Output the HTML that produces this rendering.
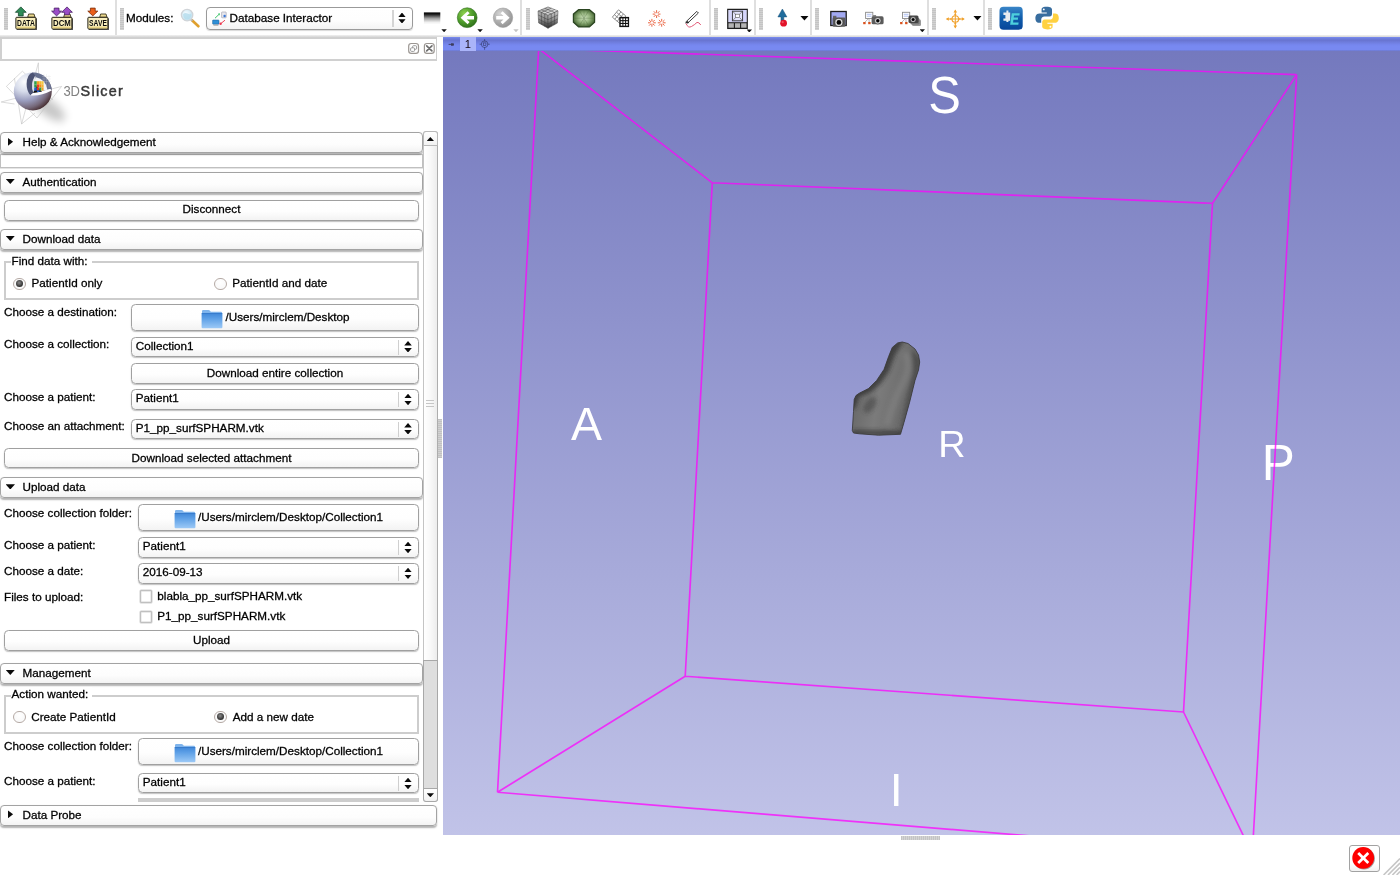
<!DOCTYPE html>
<html lang="en">
<head>
<meta charset="utf-8">
<title>3D Slicer - Database Interactor</title>
<style>
*{box-sizing:border-box;margin:0;padding:0}
html,body{width:1400px;height:875px;overflow:hidden;background:#fff}
body>*{will-change:transform}
body{position:relative;font-family:"Liberation Sans",sans-serif;font-size:11.7px;color:#000;-webkit-font-smoothing:antialiased;-webkit-text-stroke:.28px #000}
.abs{position:absolute}
/* toolbar */
#toolbar{position:absolute;left:0;top:0;width:1400px;height:37px;background:linear-gradient(#fff 0,#fff 34.6px,#ececec 35.4px,#d6d6d6 37px)}
.grip{position:absolute;top:8px;width:4.3px;height:22px;background:repeating-linear-gradient(to bottom,#c4c4c4 0,#c4c4c4 1px,#d2d2d2 1px,#d2d2d2 2px)}
.tsep{position:absolute;top:0;width:1.8px;margin-left:-.4px;height:35.4px;background:#dfdfdf}
.marr{position:absolute;width:5.4px;height:3.1px;background:#111;clip-path:polygon(0 0,100% 0,50% 100%)}
.darr{position:absolute;width:8.9px;height:5px;background:#0a0a0a;clip-path:polygon(0 0,100% 0,50% 100%)}
/* dock title */
#docktitle{position:absolute;left:0;top:36.8px;width:437.3px;height:24.3px;background:#fff;border:2px solid #d0d0d0;border-right-width:1px}
/* panel widgets */
.cbtn{position:absolute;left:0;height:21px;background:linear-gradient(#fff,#fdfdfd 60%,#f3f3f3);border:1px solid #a3a3a3;border-radius:4px;box-shadow:0 1.2px 1.6px rgba(0,0,0,.3);line-height:15.5px;padding-left:21.5px;white-space:nowrap}
.cbtn .tr{position:absolute;left:6.7px;top:4.5px;width:5.4px;height:8.2px;background:#0a0a0a;clip-path:polygon(0 0,100% 50%,0 100%)}
.cbtn .td{position:absolute;left:4.6px;top:5.3px;width:9.4px;height:5.2px;background:#0a0a0a;clip-path:polygon(0 0,100% 0,50% 100%)}
.pbtn{position:absolute;background:linear-gradient(#fff,#fefefe 55%,#f3f3f3);border:1px solid #a0a0a0;border-radius:4.5px;box-shadow:0 1px 1.2px rgba(0,0,0,.25);text-align:center;white-space:nowrap}
.combo{position:absolute;height:21px;background:linear-gradient(#fff,#fefefe 55%,#f3f3f3);border:1px solid #a0a0a0;border-radius:4.5px;box-shadow:0 1px 1.2px rgba(0,0,0,.25);line-height:16.5px;padding-left:3.8px;white-space:nowrap}
.combo i{position:absolute;right:19px;top:2px;width:1px;height:15px;background:#cfcfcf}
.combo b{position:absolute;right:6.2px;width:7.6px;height:4.5px;background:#0a0a0a}
.combo b.u{top:3.5px;clip-path:polygon(50% 0,100% 100%,0 100%)}
.combo b.d{top:10.4px;clip-path:polygon(0 0,100% 0,50% 100%)}
.lbl{position:absolute;left:4px;white-space:nowrap;line-height:14px}
.gbox{position:absolute;left:4px;width:415.3px;border:2px solid #cdcdcd}
.gtitle{position:absolute;left:4.5px;top:-9.7px;background:#fff;padding:0 4px 0 1px;line-height:14px;white-space:nowrap}
.radio{position:absolute;width:12.4px;height:12.4px;border-radius:50%;border:1.3px solid #b5aaa5;background:radial-gradient(circle at 50% 35%,#fff,#f6f6f6)}
.radio.on::after{content:"";position:absolute;left:1.6px;top:1.6px;width:7px;height:7px;border-radius:50%;background:radial-gradient(circle at 45% 40%,#8a8a8a,#2d2d2d 70%)}
.chk{position:absolute;width:12.8px;height:12.3px;border:1px solid #c0c0c0;background:#fff;border-radius:1px;box-shadow:0 0 0 .5px #d0d0d0,inset 0 0 0 .4px #d6d6d6}
.folder{position:absolute;width:22px;height:20px}
/* scrollbar */
#sbar{position:absolute;left:422.7px;top:131px;width:15px;height:671px;background:linear-gradient(to right,#fff,#f8f8f8 50%,#ececec);border:1px solid #c4c4c4;border-right-color:#adadad;border-radius:3px}
/* view */
#view{position:absolute;left:443px;top:37px;width:957px;height:798px;background:#7478be}
#vbar{position:absolute;left:0;top:0;width:957px;height:14px;background:linear-gradient(#7b8df2 0,#7080e0 8%,#6874d0 23%,#6e7cdc 36%,#7686ee 56%,#7889f1 66%,#7889f1 91%,#6a76ca 100%)}
</style>
</head>
<body>
<!--TOOLBAR-->
<div id="toolbar">
<svg class="abs" style="left:0;top:0" width="1400" height="36" viewBox="0 0 1400 36"><defs><radialGradient id="gback" cx=".35" cy=".3" r=".8"><stop offset="0" stop-color="#8fd24e"/><stop offset=".55" stop-color="#4c9a2a"/><stop offset="1" stop-color="#2a6a18"/></radialGradient><radialGradient id="gfwd" cx=".35" cy=".3" r=".8"><stop offset="0" stop-color="#d4d4d4"/><stop offset=".6" stop-color="#a8a8a8"/><stop offset="1" stop-color="#8e8e8e"/></radialGradient><linearGradient id="gbw" x1="0" y1="0" x2="0" y2="1"><stop offset="0" stop-color="#000"/><stop offset=".14" stop-color="#161616"/><stop offset=".5" stop-color="#a2a2a2"/><stop offset=".82" stop-color="#efefef"/><stop offset="1" stop-color="#fff"/></linearGradient><radialGradient id="goct" cx=".5" cy=".48" r=".58"><stop offset="0" stop-color="#d6e8c6"/><stop offset=".45" stop-color="#9ab884"/><stop offset=".8" stop-color="#5a7a46"/><stop offset="1" stop-color="#2c4820"/></radialGradient><linearGradient id="gext" x1="0" y1="0" x2="0" y2="1"><stop offset="0" stop-color="#3a86c8"/><stop offset=".5" stop-color="#0f5cab"/><stop offset="1" stop-color="#08469a"/></linearGradient><linearGradient id="gcubeT" x1="0" y1="0" x2="1" y2="1"><stop offset="0" stop-color="#8e8e8e"/><stop offset=".6" stop-color="#e2e2e2"/><stop offset="1" stop-color="#bdbdbd"/></linearGradient><linearGradient id="gcubeL" x1="0" y1="0" x2="0" y2="1"><stop offset="0" stop-color="#b4b4b4"/><stop offset=".5" stop-color="#8a8a8a"/><stop offset="1" stop-color="#2c2c2c"/></linearGradient><linearGradient id="gcubeR" x1="0" y1="0" x2="0" y2="1"><stop offset="0" stop-color="#d0d0d0"/><stop offset=".5" stop-color="#8c8c8c"/><stop offset="1" stop-color="#262626"/></linearGradient><radialGradient id="glens" cx=".4" cy=".35" r=".7"><stop offset="0" stop-color="#f4fbff"/><stop offset="1" stop-color="#bfe0ee"/></radialGradient></defs><g transform="translate(15.4,0)"><path d="M1.4 18.4 L21.6 18.4 L21.6 30 L1.4 30 Z" fill="#111" opacity=".7"/><path d="M12.3 17.3 L13.2 14 L18.6 14 L19.6 17.3 Z" fill="#ead78c" stroke="#3a331a" stroke-width=".9"/><rect x=".5" y="17.3" width="20" height="11.6" rx=".8" fill="#f9efbe" stroke="#1e1b0e" stroke-width="1"/><rect x="1.2" y="26.6" width="18.6" height="1.8" fill="#e6d182"/><text x="10.6" y="26.2" font-size="8.7" font-weight="bold" text-anchor="middle" fill="#0a0a0a" font-family="Liberation Sans, sans-serif" textLength="17.8" lengthAdjust="spacingAndGlyphs">DATA</text><path d="M5.4 6.9 L10.8 12.3 L7.800000000000001 12.3 L7.800000000000001 15.9 L3.0000000000000004 15.9 L3.0000000000000004 12.3 L0.0 12.3 Z" fill="#2e8b57" stroke="#17492d" stroke-width=".8" stroke-linejoin="round"/></g><g transform="translate(51.4,0)"><path d="M1.4 18.4 L21.6 18.4 L21.6 30 L1.4 30 Z" fill="#111" opacity=".7"/><path d="M12.3 17.3 L13.2 14 L18.6 14 L19.6 17.3 Z" fill="#ead78c" stroke="#3a331a" stroke-width=".9"/><rect x=".5" y="17.3" width="20" height="11.6" rx=".8" fill="#f9efbe" stroke="#1e1b0e" stroke-width="1"/><rect x="1.2" y="26.6" width="18.6" height="1.8" fill="#e6d182"/><text x="10.6" y="26.2" font-size="8.7" font-weight="bold" text-anchor="middle" fill="#0a0a0a" font-family="Liberation Sans, sans-serif" textLength="17.8" lengthAdjust="spacingAndGlyphs">DCM</text><path d="M5.2 15.9 L10.2 11.100000000000001 L7.6 11.100000000000001 L7.6 8.1 L2.8000000000000003 8.1 L2.8000000000000003 11.100000000000001 L0.20000000000000018 11.100000000000001 Z" fill="#9a4cc6" stroke="#4a2266" stroke-width=".8" stroke-linejoin="round"/><path d="M15.6 6.9 L21.0 12.3 L18.0 12.3 L18.0 14.8 L13.2 14.8 L13.2 12.3 L10.2 12.3 Z" fill="#9a4cc6" stroke="#4a2266" stroke-width=".8" stroke-linejoin="round"/></g><g transform="translate(87.4,0)"><path d="M1.4 18.4 L21.6 18.4 L21.6 30 L1.4 30 Z" fill="#111" opacity=".7"/><path d="M12.3 17.3 L13.2 14 L18.6 14 L19.6 17.3 Z" fill="#ead78c" stroke="#3a331a" stroke-width=".9"/><rect x=".5" y="17.3" width="20" height="11.6" rx=".8" fill="#f9efbe" stroke="#1e1b0e" stroke-width="1"/><rect x="1.2" y="26.6" width="18.6" height="1.8" fill="#e6d182"/><text x="10.6" y="26.2" font-size="8.7" font-weight="bold" text-anchor="middle" fill="#0a0a0a" font-family="Liberation Sans, sans-serif" textLength="17.8" lengthAdjust="spacingAndGlyphs">SAVE</text><path d="M5.4 15.9 L10.4 11.100000000000001 L7.800000000000001 11.100000000000001 L7.800000000000001 8.1 L3.0000000000000004 8.1 L3.0000000000000004 11.100000000000001 L0.40000000000000036 11.100000000000001 Z" fill="#ea5f1a" stroke="#7a2c08" stroke-width=".8" stroke-linejoin="round"/></g><path d="M192 20.3 L198.4 26.2" stroke="#dfa02e" stroke-width="2.7" stroke-linecap="round"/><path d="M190 18.4 L192.4 20.8" stroke="#b8b8b8" stroke-width="2"/><circle cx="187.1" cy="15.1" r="5.7" fill="url(#glens)" stroke="#d0d4d8" stroke-width="1.3"/><path d="M183 14.5 Q185 12.3 187.5 13.6 T191.3 13.2 L191.5 16 Q190 19.6 187 19.6 Q183.5 19.3 183 14.5Z" fill="#b4dcec" opacity=".8"/><rect x="423.9" y="12.4" width="16.4" height="12" fill="url(#gbw)"/><circle cx="467.2" cy="17.7" r="9.9" fill="url(#gback)" stroke="#2c6c1a" stroke-width=".6"/><path d="M460.6 17.7 L467.6 11.2 L469.6 13.3 L466.7 16 L474 16 L474 19.4 L466.7 19.4 L469.6 22.1 L467.6 24.2 Z" fill="#fff"/><circle cx="503" cy="17.7" r="9.7" fill="url(#gfwd)" stroke="#9a9a9a" stroke-width=".6"/><path d="M509.6 17.7 L502.6 11.2 L500.6 13.3 L503.5 16 L496.2 16 L496.2 19.4 L503.5 19.4 L500.6 22.1 L502.6 24.2 Z" fill="#fff"/><g stroke="#4a4a4a" stroke-width=".5" stroke-linejoin="round"><path d="M548 6.9 L558 10.9 L548 15.4 L538 11.1 Z" fill="url(#gcubeT)"/><path d="M538 11.1 L548 15.4 L548 28.3 L538.6 22.9 Z" fill="url(#gcubeL)"/><path d="M548 15.4 L558 10.9 L557.4 23.1 L548 28.3 Z" fill="url(#gcubeR)"/><path d="M541.3 9.7 L551.3 14 M544.7 8.3 L554.7 12.5 M551.3 8.2 L541.3 12.5 M554.7 9.5 L544.7 13.9 M538.2 15 L548 19.7 L557.8 15 M538.4 19 L548 24 L557.6 19 M541.3 12.5 L541.7 24.7 M544.7 13.9 L544.9 26.5 M551.3 14 L551.1 26.5 M554.7 12.5 L554.3 24.8" fill="none" stroke="#3a3a3a" stroke-width=".6" opacity=".8"/></g><path d="M578.6 9.7 L589.4 9.7 L594.6 14 L594.6 22.3 L589.4 26.9 L578.6 26.9 L573.4 22.3 L573.4 14 Z" fill="url(#goct)" stroke="#2a4420" stroke-width="1.2"/><path d="M573.4 18.2 L594.6 18.2 M584 9.7 L584 26.9 M578.6 9.7 L589.4 26.9 M589.4 9.7 L578.6 26.9" stroke="#4c6c3a" stroke-width=".6" opacity=".6"/><g transform="translate(618.5,9.8) rotate(40)" stroke="#8a8a8a" stroke-width=".9" fill="#fff"><rect x="0" y="0" width="9.6" height="9.6"/><path d="M3.2 0 V9.6 M6.4 0 V9.6 M0 3.2 H9.6 M0 6.4 H9.6" fill="none"/></g><rect x="619.3" y="16.9" width="9.8" height="10.2" fill="#111"/><g fill="#fff"><rect x="620.7" y="18.4" width="1.7" height="1.7"/><rect x="623.4" y="18.4" width="1.7" height="1.7"/><rect x="626.1" y="18.4" width="1.7" height="1.7"/><rect x="620.7" y="21.2" width="1.7" height="1.7"/><rect x="623.4" y="21.2" width="1.7" height="1.7"/><rect x="626.1" y="21.2" width="1.7" height="1.7"/><rect x="620.7" y="24" width="1.7" height="1.7"/><rect x="623.4" y="24" width="1.7" height="1.7"/><rect x="626.1" y="24" width="1.7" height="1.7"/></g><path d="M657.9 14.1 L660.5 14.1 M657.5 15.0 L659.4 16.9 M656.6 15.4 L656.6 18.0 M655.7 15.0 L653.8 16.9 M655.3 14.1 L652.7 14.1 M655.7 13.2 L653.8 11.3 M656.6 12.8 L656.6 10.2 M657.5 13.2 L659.4 11.3 M653.2 22.8 L655.8 22.8 M652.8 23.7 L654.7 25.6 M651.9 24.1 L651.9 26.7 M651.0 23.7 L649.1 25.6 M650.6 22.8 L648.0 22.8 M651.0 21.9 L649.1 20.0 M651.9 21.5 L651.9 18.9 M652.8 21.9 L654.7 20.0 M663.0 22.8 L665.6 22.8 M662.6 23.7 L664.5 25.6 M661.7 24.1 L661.7 26.7 M660.8 23.7 L658.9 25.6 M660.4 22.8 L657.8 22.8 M660.8 21.9 L658.9 20.0 M661.7 21.5 L661.7 18.9 M662.6 21.9 L664.5 20.0 " stroke="#e8522c" stroke-width=".9" fill="none"/><path d="M686 23.4 Q688 28.5 691.5 26.5 T697 22.4 Q699 22 700.8 25" fill="none" stroke="#e0486a" stroke-width=".9"/><path d="M686.2 21.6 L696.8 11.4 L698.4 13 L687.6 23.2 Z" fill="#fff" stroke="#2a2a2a" stroke-width=".9" stroke-linejoin="round"/><path d="M685.6 22.8 L687.8 21.4 L688.6 22.6 Z" fill="#222" stroke="#222" stroke-width=".8"/><rect x="727.8" y="9.4" width="19.4" height="19" fill="#b4b4b4" stroke="#1e1e1e" stroke-width="1.3"/><rect x="728.4" y="10" width="18.2" height="12.4" fill="#d6d6fb"/><path d="M727.8 22.8 H747.2 M734.4 22.8 V28.4 M740.6 22.8 V28.4" stroke="#1e1e1e" stroke-width="1.1"/><rect x="732.4" y="11.2" width="10.2" height="9.6" fill="#e4e4fc" stroke="#333" stroke-width=".9"/><rect x="735.6" y="14.2" width="4" height="3.4" fill="#fff" stroke="#555" stroke-width=".6"/><path d="M732.4 11.2 L735.6 14.2 M742.6 11.2 L739.6 14.2 M732.4 20.8 L735.6 17.6 M742.6 20.8 L739.6 17.6" stroke="#555" stroke-width=".6"/><path d="M782.4 9 L786.9 16.9 L783.8 16.9 L783.8 21 L781 21 L781 16.9 L777.9 16.9 Z" fill="#206c9c" stroke="#17507a" stroke-width=".5"/><circle cx="783.6" cy="23.2" r="3.4" fill="#e2132a"/><circle cx="782.7" cy="22.2" r="1.1" fill="#f46a72" opacity=".7"/><rect x="830.8" y="11.5" width="15.4" height="14" fill="#a2a9f1" stroke="#1c1c1c" stroke-width="1.3"/><rect x="833" y="15.8" width="3.4" height="2.4" fill="#666"/><rect x="832.6" y="17.6" width="12.8" height="9.2" rx="1.4" fill="#5a5a5a"/><circle cx="838.9" cy="22.4" r="4.1" fill="#d8d8d8" stroke="#2a2a2a" stroke-width=".7"/><circle cx="838.9" cy="22.4" r="2.3" fill="#050505"/><g transform="translate(863.6,0)"><path d="M5 18.5 L1 22.5 M5.4 18.5 L5.6 22.5" stroke="#888" stroke-width=".6"/><rect x="2" y="12.3" width="7.2" height="6.2" fill="#fff" stroke="#8a8a8a" stroke-width=".9"/><path d="M3.2 14.3 H8 M3.2 16.2 H8" stroke="#9ab0ee" stroke-width=".8"/><rect x="-.4" y="22" width="2.4" height="2.2" fill="#d8501c"/><rect x="4.6" y="22" width="2.4" height="2.2" fill="#d8501c"/><rect x="8" y="16.3" width="12" height="8" rx="1.6" fill="#5c5c5c"/><rect x="9.5" y="15.2" width="3" height="1.6" fill="#6a6a6a"/><circle cx="14.2" cy="20.8" r="3.3" fill="#cfcfcf" stroke="#333" stroke-width=".6"/><circle cx="14.2" cy="20.8" r="1.7" fill="#050505"/></g><g transform="translate(900.5,0)"><path d="M5 18.5 L1 22.5 M5.4 18.5 L5.6 22.5" stroke="#888" stroke-width=".6"/><rect x="2" y="12.3" width="7.2" height="6.2" fill="#fff" stroke="#8a8a8a" stroke-width=".9"/><path d="M3.2 14.3 H8 M3.2 16.2 H8" stroke="#9ab0ee" stroke-width=".8"/><rect x="-.4" y="22" width="2.4" height="2.2" fill="#d8501c"/><rect x="4.6" y="22" width="2.4" height="2.2" fill="#d8501c"/><rect x="11.5" y="19.5" width="9" height="6.6" rx="1.4" fill="#9a9a9a"/><rect x="10" y="18" width="9" height="6.6" rx="1.4" fill="#777"/><rect x="8" y="15.6" width="10" height="7.4" rx="1.5" fill="#444"/><circle cx="12.6" cy="19.6" r="3" fill="#bdbdbd" stroke="#222" stroke-width=".6"/><circle cx="12.6" cy="19.6" r="1.5" fill="#050505"/></g><g stroke="#f0a12c" fill="none"><circle cx="955.3" cy="19" r="3.3" stroke-width="1.1"/><path d="M955.3 10.5 V27.5 M946.8 19 H963.8" stroke-width="1"/></g><g fill="#f0a12c"><path d="M955.3 9.4 L957.1 12.4 L953.5 12.4Z M955.3 28.4 L957.1 25.4 L953.5 25.4Z M945.8 19 L948.8 17.2 L948.8 20.8Z M964.8 19 L961.8 17.2 L961.8 20.8Z"/><path d="M955.3 13.2 L956.6 15 L954 15Z M955.3 24.8 L956.6 23 L954 23Z M949.6 19 L951.4 17.8 L951.4 20.2Z M961 19 L959.2 17.8 L959.2 20.2Z"/></g><rect x="999.5" y="6.7" width="23.2" height="23" rx="4" fill="url(#gext)"/><path d="M1003.4 12.4 H1006.4 V10.6 H1008.4 V12.4 H1010.2 V20.8 H1008.4 V22 H1006.4 V20.8 H1003.4 V18.4 H1005.4 V15 H1003.4 Z" fill="#e8ecf0"/><path transform="translate(2.6 0) skewX(-8)" d="M1011 13.2 H1019 V15.4 H1013.6 V17.6 H1018 V19.8 H1013.6 V22.4 H1019.2 V24.8 H1011 Z" fill="#4ccfdc"/><path d="M1046.6 6.8 C1041.4 6.8 1041.6 9 1041.6 9.6 L1041.6 12.4 L1046.8 12.4 L1046.8 13.4 L1039.4 13.4 C1035.6 13.4 1035.4 17 1035.4 18.2 C1035.4 19.6 1035.8 22.8 1039 22.8 L1041.2 22.8 L1041.2 19.8 C1041.2 17.4 1043 16.6 1044.4 16.6 L1049.4 16.6 C1051.4 16.6 1052 15 1052 14 L1052 9.6 C1052 8 1050.6 6.8 1046.6 6.8 Z" fill="#386d9f"/><circle cx="1043.8" cy="9.4" r=".95" fill="#fff"/><path d="M1047.6 29.4 C1052.8 29.4 1052.6 27.2 1052.6 26.6 L1052.6 23.8 L1047.4 23.8 L1047.4 22.8 L1054.8 22.8 C1058.6 22.8 1058.8 19.2 1058.8 18 C1058.8 16.6 1058.4 13.4 1055.2 13.4 L1053 13.4 L1053 16.4 C1053 18.8 1051.2 19.6 1049.8 19.6 L1044.8 19.6 C1042.8 19.6 1042.2 21.2 1042.2 22.2 L1042.2 26.6 C1042.2 28.2 1043.6 29.4 1047.6 29.4 Z" fill="#ffd140"/><circle cx="1050.4" cy="26.8" r=".95" fill="#fff"/></svg><div class="grip" style="left:3.5px;width:4px"></div><div class="grip" style="left:120px;width:4px"></div><div class="grip" style="left:525.5px;width:4px"></div><div class="grip" style="left:714.2px;width:4px"></div><div class="grip" style="left:759px;width:4px"></div><div class="grip" style="left:815.2px;width:4px"></div><div class="grip" style="left:932px;width:4px"></div><div class="grip" style="left:988.4px;width:4px"></div><div class="tsep" style="left:115.5px"></div><div class="tsep" style="left:520.8px"></div><div class="tsep" style="left:709.3px"></div><div class="tsep" style="left:754.1px"></div><div class="tsep" style="left:810.7px"></div><div class="tsep" style="left:927.2px"></div><div class="tsep" style="left:983.5px"></div><div class="abs" style="left:126px;top:11.3px;line-height:14px;white-space:nowrap">Modules:</div><div class="abs" id="modcombo" style="left:206px;top:7px;width:207px;height:22.5px;border:1px solid #9a9a9a;border-radius:4px;background:linear-gradient(#fff,#fefefe 55%,#f3f3f3);box-shadow:0 1px 1px rgba(0,0,0,.15)"><span class="abs" style="left:22.6px;top:3.4px;line-height:14px;white-space:nowrap">Database Interactor</span><span class="abs" style="left:185.3px;top:1.8px;width:1.5px;height:17.2px;background:#d4d4d4"></span><span class="abs" style="left:191.4px;top:4.5px;width:7.2px;height:4.4px;background:#0a0a0a;clip-path:polygon(50% 0,100% 100%,0 100%)"></span><span class="abs" style="left:191.4px;top:11.2px;width:7.2px;height:4.3px;background:#0a0a0a;clip-path:polygon(0 0,100% 0,50% 100%)"></span><svg class="abs" style="left:5px;top:3px" width="16" height="16" viewBox="0 0 16 16"><rect x=".6" y="9" width="6.4" height="4.2" rx=".6" fill="#2e8fd6" stroke="#1a5e98" stroke-width=".5"/><rect x="1.4" y="13.6" width="5" height="1" fill="#9a9a9a"/><path d="M3 7.2 L7 3.4" stroke="#3cc46a" stroke-width="1"/><path d="M8 2.2 L7.6 4.6 L5.8 2.8Z" fill="#3cc46a"/><rect x="9.6" y="1" width="4.6" height="5.8" rx=".6" fill="#e8e8ee" stroke="#9a9aa8" stroke-width=".6"/><circle cx="12.6" cy="5" r="1.2" fill="#3a78d8"/><path d="M13 9.2 L9 12.4" stroke="#ee4458" stroke-width="1"/><circle cx="8.6" cy="12.8" r="1.2" fill="#ee3850"/></svg></div><div class="marr" style="left:441.4px;top:29.2px;background:#111"></div><div class="marr" style="left:477.4px;top:29.2px;background:#111"></div><div class="marr" style="left:513.3px;top:29.2px;background:#c4c4c4"></div><div class="marr" style="left:746.6px;top:29.4px;background:#111"></div><div class="marr" style="left:919.6px;top:29.2px;background:#111"></div><div class="darr" style="left:800px;top:15.5px"></div><div class="darr" style="left:973px;top:15.5px"></div>
</div>
<!--DOCK-->
<div id="docktitle"></div>
<svg class="abs" style="left:405px;top:40px" width="34" height="17" viewBox="405 40 34 17">
<rect x="408.7" y="43.5" width="9.8" height="9.8" rx="2.6" fill="#fff" stroke="#9b9692" stroke-width="1.2"/>
<rect x="412.6" y="45.7" width="4" height="3.6" rx="1" fill="none" stroke="#8e8e8e" stroke-width=".9"/>
<rect x="410.6" y="47.8" width="4" height="3.6" rx="1" fill="#fff" stroke="#8e8e8e" stroke-width=".9"/>
<rect x="424.4" y="43.5" width="9.8" height="9.8" rx="2.6" fill="#fff" stroke="#9b9692" stroke-width="1.2"/>
<path d="M426.7 45.9 L431.9 50.9 M431.9 45.9 L426.7 50.9" stroke="#6f6f6f" stroke-width="1.7" stroke-linecap="round"/>
</svg>
<!--LOGO-->
<svg class="abs" style="left:0;top:60px" width="140" height="70" viewBox="0 60 140 70">
<defs>
<radialGradient id="sph" cx=".28" cy=".25" r=".86"><stop offset="0" stop-color="#fbfcfe"/><stop offset=".3" stop-color="#d6dbea"/><stop offset=".58" stop-color="#9a9dbe"/><stop offset=".8" stop-color="#756879"/><stop offset=".95" stop-color="#4a3236"/><stop offset="1" stop-color="#3e2a2c"/></radialGradient>
<filter id="lb" x="-50%" y="-50%" width="200%" height="200%"><feGaussianBlur stdDeviation="4"/></filter>
<linearGradient id="inw" x1="0" y1="0" x2="1" y2="0"><stop offset="0" stop-color="#c9cfd6"/><stop offset="1" stop-color="#fff"/></linearGradient>
</defs>
<ellipse cx="49" cy="108.5" rx="19" ry="8" fill="#000" opacity=".22" filter="url(#lb)" transform="rotate(36 49 108.5)"/>
<g fill="none" stroke="#c2c2c2" stroke-width=".6"><path d="M38.4 62.8 L21.6 124 L35 113 M38.4 62.8 L38.6 100 M1.2 102 L61.6 86.4 L37 118 L6.4 86.4 L22.4 71.2 L53 100 M1.2 102 L14.5 104 M21.6 124 L14.4 78"/></g>
<circle cx="32.8" cy="91.4" r="19" fill="url(#sph)"/>
<path d="M32.6 72.5 A19 19 0 0 1 51.7 90.2 L33.4 93.2 Z" fill="#67708f"/>
<path d="M36 77.2 A14.2 14.2 0 0 1 47.4 89.8 L33.6 92.4 Z" fill="#f2f4f7"/>
<path d="M32.6 72.5 Q27 74 26.6 84 Q26.6 91 30.4 95.2 L33.6 92.8 Q30.4 84 35.2 75.6 Z" fill="#4c5373"/>
<path d="M35.2 75.8 Q29.6 84 33.4 93 L36.5 82 Z" fill="url(#inw)"/>
<path d="M30.4 95.2 Q40 96.4 51.7 90.4 Q51 88.6 48.6 89.2 Q40 92 33.6 92.6 Z" fill="#fdfdfe"/>
<path d="M33.2 93 L36.4 86 L42 91.6 Z" fill="#111"/>
<g><rect x="34.2" y="81.2" width="2.6" height="3.2" fill="#2fa04a"/><rect x="36.8" y="81.2" width="2.4" height="3.2" fill="#f0a020"/><rect x="39.2" y="81.2" width="2.2" height="3.2" fill="#f4b830"/><rect x="41.4" y="81.2" width="2.2" height="3.2" fill="#f6c840"/>
<rect x="34.2" y="84.4" width="2.6" height="3.2" fill="#2a9c48"/><rect x="36.8" y="84.4" width="2.4" height="3.2" fill="#ee3a1c"/><rect x="39.2" y="84.4" width="2.2" height="3.2" fill="#f08a1c"/><rect x="41.4" y="84.4" width="2.2" height="3.2" fill="#f4b430"/>
<rect x="34.2" y="87.6" width="2.6" height="3" fill="#2060d0"/><rect x="36.8" y="87.6" width="2.4" height="3" fill="#e8341a"/><rect x="39.2" y="87.6" width="2.2" height="3" fill="#2fa04a"/><rect x="41.4" y="87.6" width="2.2" height="3" fill="#e8a428"/>
<rect x="37" y="90.4" width="2.4" height="1.6" fill="#2060d0"/></g>
<g fill="none" stroke="#d4d4d4" stroke-width=".4" opacity=".6"><path d="M44 74 V84 M46.5 74 V86 M49 75 V88 M42 76.5 H51 M42 79 H51 M44 81.5 H51"/></g>
<text x="63.4" y="95.5" font-family="Liberation Sans, sans-serif" font-size="14.4" fill="#808080" textLength="16.6" lengthAdjust="spacingAndGlyphs">3D</text><text x="80.6" y="95.5" font-family="Liberation Sans, sans-serif" font-size="14.4" fill="#383838" stroke="#383838" stroke-width=".45" letter-spacing="1.25">Slicer</text>
</svg>
<!--PANEL-->
<div id="panel" style="position:absolute;left:0;top:0;width:0;height:0">
<div class="abs" style="left:0;top:154.3px;width:422.5px;height:13.6px;border:1px solid #c0c0c0;border-top:1px solid #cdcdcd;box-shadow:0 .4px 0 .3px #dadada"></div>
<div class="cbtn" style="top:132.2px;width:422.5px;height:20.6px;line-height:17px"><span class="tr"></span>Help &amp; Acknowledgement</div>

<div class="cbtn" style="top:171.8px;width:422.5px;height:21px;line-height:18.3px"><span class="td" style="top:6px"></span>Authentication</div>
<div class="pbtn" style="left:4px;top:199.5px;width:415px;height:21px;line-height:16px">Disconnect</div>
<div class="cbtn" style="top:229.2px;width:422.5px;height:20.8px;line-height:18.6px"><span class="td" style="top:5.6px"></span>Download data</div>
<div class="gbox" style="top:261.2px;height:38.7px"><span class="gtitle">Find data with:</span></div>
<div class="radio on" style="left:13.2px;top:277.6px"></div><div class="lbl" style="left:31.5px;top:276.45px">PatientId only</div>
<div class="radio" style="left:214.4px;top:277.6px"></div><div class="lbl" style="left:232.3px;top:276.45px">PatientId and date</div>
<div class="lbl" style="left:4px;top:305.35px">Choose a destination:</div>
<div class="pbtn" style="left:131px;top:304.3px;width:288px;height:26.5px;line-height:24px"><span style="margin-left:25px">/Users/mirclem/Desktop</span></div>
<svg class="folder" style="left:200.9px;top:308.6px" viewBox="0 0 22 20"><defs><linearGradient id="fg1" x1="0" y1="0" x2="0" y2="1"><stop offset="0" stop-color="#3f86d8"/><stop offset=".35" stop-color="#5c9fe6"/><stop offset="1" stop-color="#9cc9f6"/></linearGradient></defs><path d="M1 2.2 Q1 1 2.2 1 L7.5 1 Q8.5 1 9.2 2 L9.8 2.8 L20 2.8 Q21 2.8 21 3.8 L21 6 L1 6 Z" fill="#7fb4ec"/><rect x=".6" y="4" width="20.8" height="15.2" rx="1" fill="url(#fg1)"/><rect x=".6" y="4" width="20.8" height="1" fill="#3577c8" opacity=".7"/></svg>
<div class="lbl" style="left:4px;top:336.65px">Choose a collection:</div>
<div class="combo" style="left:131px;top:336.5px;width:288px;height:20.5px">Collection1<i></i><b class="u"></b><b class="d"></b></div>
<div class="pbtn" style="left:131px;top:363px;width:288px;height:20.5px;line-height:18.5px">Download entire collection</div>
<div class="lbl" style="left:4px;top:390.35px">Choose a patient:</div>
<div class="combo" style="left:131px;top:389.3px;width:288px;height:20.5px">Patient1<i></i><b class="u"></b><b class="d"></b></div>
<div class="lbl" style="left:4px;top:419.25px">Choose an attachment:</div>
<div class="combo" style="left:131px;top:418.5px;width:288px;height:20.5px">P1_pp_surfSPHARM.vtk<i></i><b class="u"></b><b class="d"></b></div>
<div class="pbtn" style="left:4px;top:447.5px;width:415px;height:20.5px;line-height:18.5px">Download selected attachment</div>
<div class="cbtn" style="top:477.1px;width:422.5px;height:21px;line-height:17.3px"><span class="td" style="top:6.2px"></span>Upload data</div>
<div class="lbl" style="left:4px;top:505.95px">Choose collection folder:</div>
<div class="pbtn" style="left:138px;top:504.3px;width:281px;height:26.5px;line-height:24px"><span style="margin-left:24px">/Users/mirclem/Desktop/Collection1</span></div>
<svg class="folder" style="left:173.7px;top:508.6px" viewBox="0 0 22 20"><defs><linearGradient id="fg2" x1="0" y1="0" x2="0" y2="1"><stop offset="0" stop-color="#3f86d8"/><stop offset=".35" stop-color="#5c9fe6"/><stop offset="1" stop-color="#9cc9f6"/></linearGradient></defs><path d="M1 2.2 Q1 1 2.2 1 L7.5 1 Q8.5 1 9.2 2 L9.8 2.8 L20 2.8 Q21 2.8 21 3.8 L21 6 L1 6 Z" fill="#7fb4ec"/><rect x=".6" y="4" width="20.8" height="15.2" rx="1" fill="url(#fg2)"/><rect x=".6" y="4" width="20.8" height="1" fill="#3577c8" opacity=".7"/></svg>
<div class="lbl" style="left:4px;top:537.55px">Choose a patient:</div>
<div class="combo" style="left:138px;top:537.3px;width:281px;height:20.5px">Patient1<i></i><b class="u"></b><b class="d"></b></div>
<div class="lbl" style="left:4px;top:563.85px">Choose a date:</div>
<div class="combo" style="left:138px;top:563.2px;width:281px;height:20.5px">2016-09-13<i></i><b class="u"></b><b class="d"></b></div>
<div class="lbl" style="left:4px;top:589.95px">Files to upload:</div>
<div class="chk" style="left:139.7px;top:590.3px"></div><div class="lbl" style="left:157.3px;top:588.95px">blabla_pp_surfSPHARM.vtk</div>
<div class="chk" style="left:139.7px;top:610.5px"></div><div class="lbl" style="left:157.3px;top:609.25px">P1_pp_surfSPHARM.vtk</div>
<div class="pbtn" style="left:4px;top:630.3px;width:415px;height:20.5px;line-height:17.8px">Upload</div>
<div class="cbtn" style="top:662.9px;width:422.5px;height:21px;line-height:18.2px"><span class="td" style="top:5.9px"></span>Management</div>
<div class="gbox" style="top:694.9px;height:39px"><span class="gtitle">Action wanted:</span></div>
<div class="radio" style="left:13.2px;top:710.9px"></div><div class="lbl" style="left:31.2px;top:709.65px">Create PatientId</div>
<div class="radio on" style="left:214.4px;top:710.9px"></div><div class="lbl" style="left:232.8px;top:709.65px">Add a new date</div>
<div class="lbl" style="left:4px;top:739.05px">Choose collection folder:</div>
<div class="pbtn" style="left:138px;top:738.2px;width:281px;height:26.5px;line-height:24px"><span style="margin-left:24px">/Users/mirclem/Desktop/Collection1</span></div>
<svg class="folder" style="left:173.7px;top:742.5px" viewBox="0 0 22 20"><defs><linearGradient id="fg3" x1="0" y1="0" x2="0" y2="1"><stop offset="0" stop-color="#3f86d8"/><stop offset=".35" stop-color="#5c9fe6"/><stop offset="1" stop-color="#9cc9f6"/></linearGradient></defs><path d="M1 2.2 Q1 1 2.2 1 L7.5 1 Q8.5 1 9.2 2 L9.8 2.8 L20 2.8 Q21 2.8 21 3.8 L21 6 L1 6 Z" fill="#7fb4ec"/><rect x=".6" y="4" width="20.8" height="15.2" rx="1" fill="url(#fg3)"/><rect x=".6" y="4" width="20.8" height="1" fill="#3577c8" opacity=".7"/></svg>
<div class="lbl" style="left:4px;top:773.55px">Choose a patient:</div>
<div class="combo" style="left:138px;top:773.3px;width:281px;height:20px">Patient1<i></i><b class="u"></b><b class="d"></b></div>
<div class="abs" style="left:138px;top:798px;width:281px;height:3.5px;background:#cdcdcd"></div>
<div class="cbtn" style="top:805px;width:437px;height:21px;line-height:18px"><span class="tr" style="top:4.2px"></span>Data Probe</div>
<div id="sbar"><div class="abs" style="left:-1px;top:-1px;width:15px;height:14.5px;border:1px solid #b9b9b9;border-radius:3px 3px 0 0;background:linear-gradient(#fff,#f2f2f2)"></div><div class="abs" style="left:3px;top:5px;width:7.3px;height:4px;background:#0a0a0a;clip-path:polygon(50% 0,100% 100%,0 100%)"></div><div class="abs" style="left:2.5px;top:267.5px;width:7.6px;height:1.7px;background:#c6c6c6;box-shadow:0 3px 0 #c6c6c6,0 6px 0 #c6c6c6"></div><div class="abs" style="left:-1px;top:528px;width:15px;height:128.5px;background:#dedede;border:1px solid #a8a8a8"></div><div class="abs" style="left:-1px;top:655.5px;width:15px;height:14.5px;border:1px solid #a8a8a8;border-radius:0 0 3px 3px;background:linear-gradient(#fff,#f2f2f2)"></div><div class="abs" style="left:3px;top:661.3px;width:7.3px;height:4px;background:#0a0a0a;clip-path:polygon(0 0,100% 0,50% 100%)"></div></div>
<div class="abs" style="left:438px;top:419px;width:4px;height:39px;background:repeating-linear-gradient(to bottom,#c2c2c2 0,#c2c2c2 1px,#d2d2d2 1px,#d2d2d2 2px)"></div>
</div>
<!--VIEW-->
<div id="view">
<svg id="scene" class="abs" style="left:0;top:14px" width="957" height="784" viewBox="0 14 957 784">
<defs>
<linearGradient id="bg" x1="0" y1="0" x2="0" y2="1"><stop offset="0" stop-color="#7479be"/><stop offset="1" stop-color="#c1c3e8"/></linearGradient>
<linearGradient id="mg" x1="0" y1="0" x2="1" y2="0.25"><stop offset="0" stop-color="#606060"/><stop offset=".5" stop-color="#7b7b7b"/><stop offset="1" stop-color="#666"/></linearGradient>
<clipPath id="mclip"><path d="M459.3,305.0 L465.0,306.5 L472.0,312.0 L475.5,318.0 L476.7,325.0 L475.5,333.0 L472.0,343.4 L466.6,365.3 L461.0,385.4 L457.5,397.3 L435.5,398.2 L416.3,396.8 L410.5,396.0 L409.3,393.5 L410.5,374.5 L411.2,362.5 L413.0,358.5 L416.3,356.2 L425.5,351.6 L433.7,343.4 L441.0,332.4 L445.6,319.6 L449.3,310.4 L454.7,305.9 Z"/></clipPath>
<filter id="mb" x="-50%" y="-50%" width="200%" height="200%"><feGaussianBlur stdDeviation="2.2"/></filter>
</defs>
<rect x="0" y="14" width="957" height="784" fill="url(#bg)"/>
<g fill="#fff" font-family="Liberation Sans, sans-serif" text-anchor="middle">
<text transform="translate(501.5 75.9) scale(.95 1)" x="0" y="0" font-size="51.5">S</text>
<text x="143.6" y="402.8" font-size="46.5">A</text>
<text x="508.8" y="419.8" font-size="37.8">R</text>
<text x="835.3" y="442.6" font-size="49.5">P</text>
<text x="453.2" y="769" font-size="46.5">I</text>
</g>
<path d="M95.7,11.6 L853.7,37.6 M853.7,37.6 L809.3,817.1 M809.3,817.1 L54.5,755.3 M54.5,755.3 L95.7,11.6 M269.3,145.8 L769.5,166.3 M769.5,166.3 L740.5,675.0 M740.5,675.0 L242.2,639.3 M242.2,639.3 L269.3,145.8 M95.7,11.6 L269.3,145.8 M853.7,37.6 L769.5,166.3 M54.5,755.3 L242.2,639.3 M809.3,817.1 L740.5,675.0" fill="none" stroke="#ff00ff" stroke-opacity=".74" stroke-width="1.65"/>
<path d="M459.3,305.0 L465.0,306.5 L472.0,312.0 L475.5,318.0 L476.7,325.0 L475.5,333.0 L472.0,343.4 L466.6,365.3 L461.0,385.4 L457.5,397.3 L435.5,398.2 L416.3,396.8 L410.5,396.0 L409.3,393.5 L410.5,374.5 L411.2,362.5 L413.0,358.5 L416.3,356.2 L425.5,351.6 L433.7,343.4 L441.0,332.4 L445.6,319.6 L449.3,310.4 L454.7,305.9 Z" fill="url(#mg)"/>
<g clip-path="url(#mclip)" filter="url(#mb)">
<path d="M446 303 L462 302 L452 318 L446 334 L438 346 L428 355 L416 360 L412 372 L406 370 L410 352 L430 340 L440 320 Z" fill="#2e2e2e" opacity=".75"/>
<path d="M468 312 L479 322 L474 345 L462 392 L456 400 L464 360 L470 335 Z" fill="#3a3a3a" opacity=".6"/>
<ellipse cx="427" cy="368" rx="5" ry="9" fill="#3c3c3c" opacity=".5" transform="rotate(35 427 368)"/>
<path d="M462 316 Q470 328 458 350 Q450 366 444 388" stroke="#858585" stroke-width="7" fill="none" opacity=".55"/>
<path d="M408 398 L460 399 L458 394 L410 393 Z" fill="#2a2a2a" opacity=".7"/>
</g>
<path d="M459.3,305.0 L465.0,306.5 L472.0,312.0 L475.5,318.0 L476.7,325.0 L475.5,333.0 L472.0,343.4 L466.6,365.3 L461.0,385.4 L457.5,397.3 L435.5,398.2 L416.3,396.8 L410.5,396.0 L409.3,393.5 L410.5,374.5 L411.2,362.5 L413.0,358.5 L416.3,356.2 L425.5,351.6 L433.7,343.4 L441.0,332.4 L445.6,319.6 L449.3,310.4 L454.7,305.9 Z" fill="none" stroke="#3a3a3a" stroke-width="1" stroke-linejoin="round" opacity=".85"/>
</svg>
<div id="vbar"><div class="abs" style="left:17px;top:0;width:15.5px;height:14px;background:#aab4f9"></div><div class="abs" style="left:17px;top:0;width:15.5px;height:14px;line-height:14px;text-align:center;font-size:11.2px;color:#16080f;-webkit-text-stroke:0">1</div>
<svg class="abs" style="left:0;top:0" width="60" height="14" viewBox="443 37 60 14"><path d="M448.6 44.4 H451.3" stroke="#3c3c5e" stroke-width=".9"/><path d="M451 43.2 H453.6 Q454.4 44.4 453.6 45.7 H451 Z" fill="#3c3c5e"/>
<g stroke="#343c6c" fill="none" stroke-width=".65"><circle cx="484.6" cy="44.2" r="3.3"/><rect x="483.3" y="42.9" width="2.6" height="2.6" stroke-width=".6"/><path d="M484.6 39 V41.4 M484.6 47 V49.8 M479.6 44.2 H481.8 M487.4 44.2 H489.8"/></g></svg></div>
</div>
<div class="abs" style="left:901px;top:835.7px;width:39.2px;height:4.1px;background:repeating-linear-gradient(to right,#c4c4c4 0,#c4c4c4 1px,#d4d4d4 1px,#d4d4d4 2px)"></div>
<div class="abs" style="left:1349px;top:845px;width:30.5px;height:26.8px;border:1.4px solid #a2a2a2;border-radius:3px;background:linear-gradient(#fff 70%,#f2f2f2)"></div>
<svg class="abs" style="left:1345px;top:840px" width="55" height="35" viewBox="1345 840 55 35">
<circle cx="1364" cy="858.6" r="10.9" fill="#555" opacity=".55"/>
<circle cx="1363.2" cy="857.9" r="10.9" fill="#fe0000"/>
<path d="M1358.2 853 L1368.3 863 M1368.3 853 L1358.2 863" stroke="#fff" stroke-width="2.7"/>
<path d="M1383.6 875 L1400 858.6 M1388 875 L1400 863 M1392.4 875 L1400 867.4 M1396.6 875 L1400 871.6" stroke="#c6c6c6" stroke-width="1.6"/>
</svg>
</body>
</html>
